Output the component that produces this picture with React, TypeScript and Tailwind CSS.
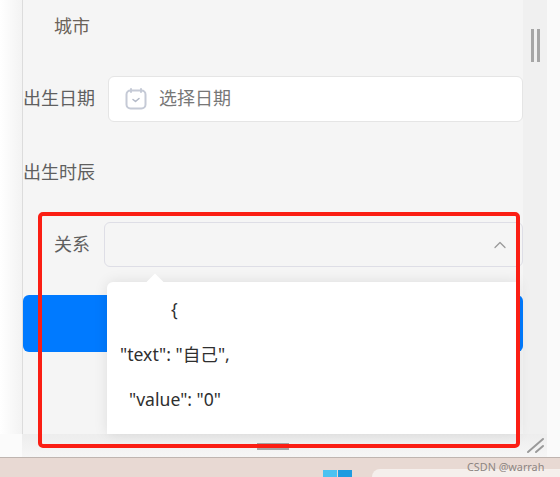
import { ChevronUp } from "lucide-react";

const font = "font-['Noto_Sans','Noto_Sans_CJK_SC',sans-serif]";

function CalendarIcon() {
  return (
    <svg width="22" height="22" viewBox="0 0 22 22" fill="none" className="shrink-0">
      <rect x="1.5" y="2.5" width="19" height="18" rx="4" stroke="#c5cad6" strokeWidth="2" />
      <path d="M6 1v3M16 1v3" stroke="#c5cad6" strokeWidth="2" strokeLinecap="round" />
      <path d="M8 11.5l2.5 2 3.5-3" stroke="#b4bac8" strokeWidth="1.6" strokeLinecap="round" strokeLinejoin="round" />
    </svg>
  );
}

export default function App() {
  return (
    <div className={`relative w-[560px] h-[477px] overflow-hidden bg-white text-[17.6px] ${font}`}>
      <div className="flex h-[458px] flex-col border-b border-[#bfb5b0]">
        <div className="flex h-[434px]">
          {/* Left gutter */}
          <div className="w-[22px] shrink-0 bg-gradient-to-r from-white to-[#f3f3f3]" />

          {/* Form panel */}
          <div className="flex w-[501px] shrink-0 flex-col border-l border-[#dcdcdc] bg-[#f5f5f5] text-[18px] text-[#666]">
            <div className="flex h-[54px] items-center pb-[2px] pl-[31px] text-[#6b6259]">城市</div>
            <div className="mt-[22px] flex h-[46px] items-center">
              <span className="w-[85px] shrink-0 pb-[2px] text-[#5f5f5f]">出生日期</span>
              <div className="flex h-full flex-1 items-center gap-[12px] rounded-[6px] border border-[#e5e5e5] bg-white pl-[16px] text-[#777]">
                <CalendarIcon />
                <span className="pb-[2px]">选择日期</span>
              </div>
            </div>
            <div className="mt-[27px] flex h-[46px] items-center text-[#5f5f5f]">出生时辰</div>
            <div className="mt-[27px] flex h-[45px] items-center">
              <span className="w-[81px] shrink-0 pl-[31px] text-[#5f5f5f]">关系</span>
              <div className="flex h-full flex-1 items-center justify-end rounded-[6px] border border-[#dedee6] bg-[#f5f5f5] pr-[12px]">
                <ChevronUp size={20} strokeWidth={1.5} color="#9a9a9a" />
              </div>
            </div>
            <div className="mt-[28px] h-[57px] w-full rounded-[6px] bg-[#007aff]" />
          </div>

          {/* Right gutter with splitter handle */}
          <div className="flex w-[24px] shrink-0 justify-center gap-[3px] bg-[#f0f0f0] pt-[29px]">
            <div className="h-[33px] w-[3px] bg-[#a6a6a6]" />
            <div className="h-[33px] w-[3px] bg-[#a6a6a6]" />
          </div>
          <div className="flex-1 bg-[#fafafa]" />
        </div>

        {/* Bottom strip */}
        <div className="flex h-[23px]">
          <div className="w-[22px] shrink-0 bg-[#fbfbfb]" />
          <div className="w-[525px] shrink-0 bg-gradient-to-b from-[#ededed] to-[#f6f6f6] pl-[235px] pt-[9px]">
            <div className="h-[7px] w-[32px] bg-[#a5a5a5]" />
          </div>
          <div className="flex-1 bg-[#fafafa]" />
        </div>
      </div>

      {/* Desktop behind the window */}
      <div className="flex h-[19px] bg-[#e8d9d3]">
        <div className="ml-[323px] mt-[12px] flex h-[7px] gap-[1px]">
          <div className="w-[14px] bg-[#4cc2f1]" />
          <div className="w-[14px] bg-[#1e9be0]" />
        </div>
        <div className="ml-[20px] mt-[11px] flex-1 rounded-tl-[18px] bg-[#f5efec]" />
      </div>

      {/* Select dropdown popup */}
      <div className="absolute left-[107px] top-[282px] h-[152px] w-[411px] rounded-tl-[6px] bg-white shadow-[0_0_14px_rgba(0,0,0,0.1)]">
        <div className="absolute left-[42px] top-[-6px] size-[12px] rotate-45 bg-white" />
        <div className="relative flex flex-col text-[#2f2f2f]">
          <div className="mt-[15px] h-[24px] pl-[64px] leading-[24px]">{"{"}</div>
          <div className="mt-[21px] h-[24px] pl-[13px] leading-[24px]">"text": "自己",</div>
          <div className="mt-[21px] h-[24px] pl-[22px] leading-[24px]">"value": "0"</div>
        </div>
      </div>

      {/* Red annotation box */}
      <div className="absolute left-[38px] top-[212px] h-[236px] w-[482px] rounded-[5px] border-[4px] border-[#fb1e14]" />

      {/* Resize grip */}
      <svg className="absolute left-[526px] top-[436px]" width="20" height="18" viewBox="0 0 20 18" fill="none">
        <path d="M2 16L17 3M10 16L17 10" stroke="#9a9a9a" strokeWidth="2" strokeLinecap="round" />
      </svg>

      {/* Watermark */}
      <span className="absolute left-[467px] top-[455px] text-[10.8px] leading-[24px] text-[#8d8582]">CSDN @warrah</span>
    </div>
  );
}
